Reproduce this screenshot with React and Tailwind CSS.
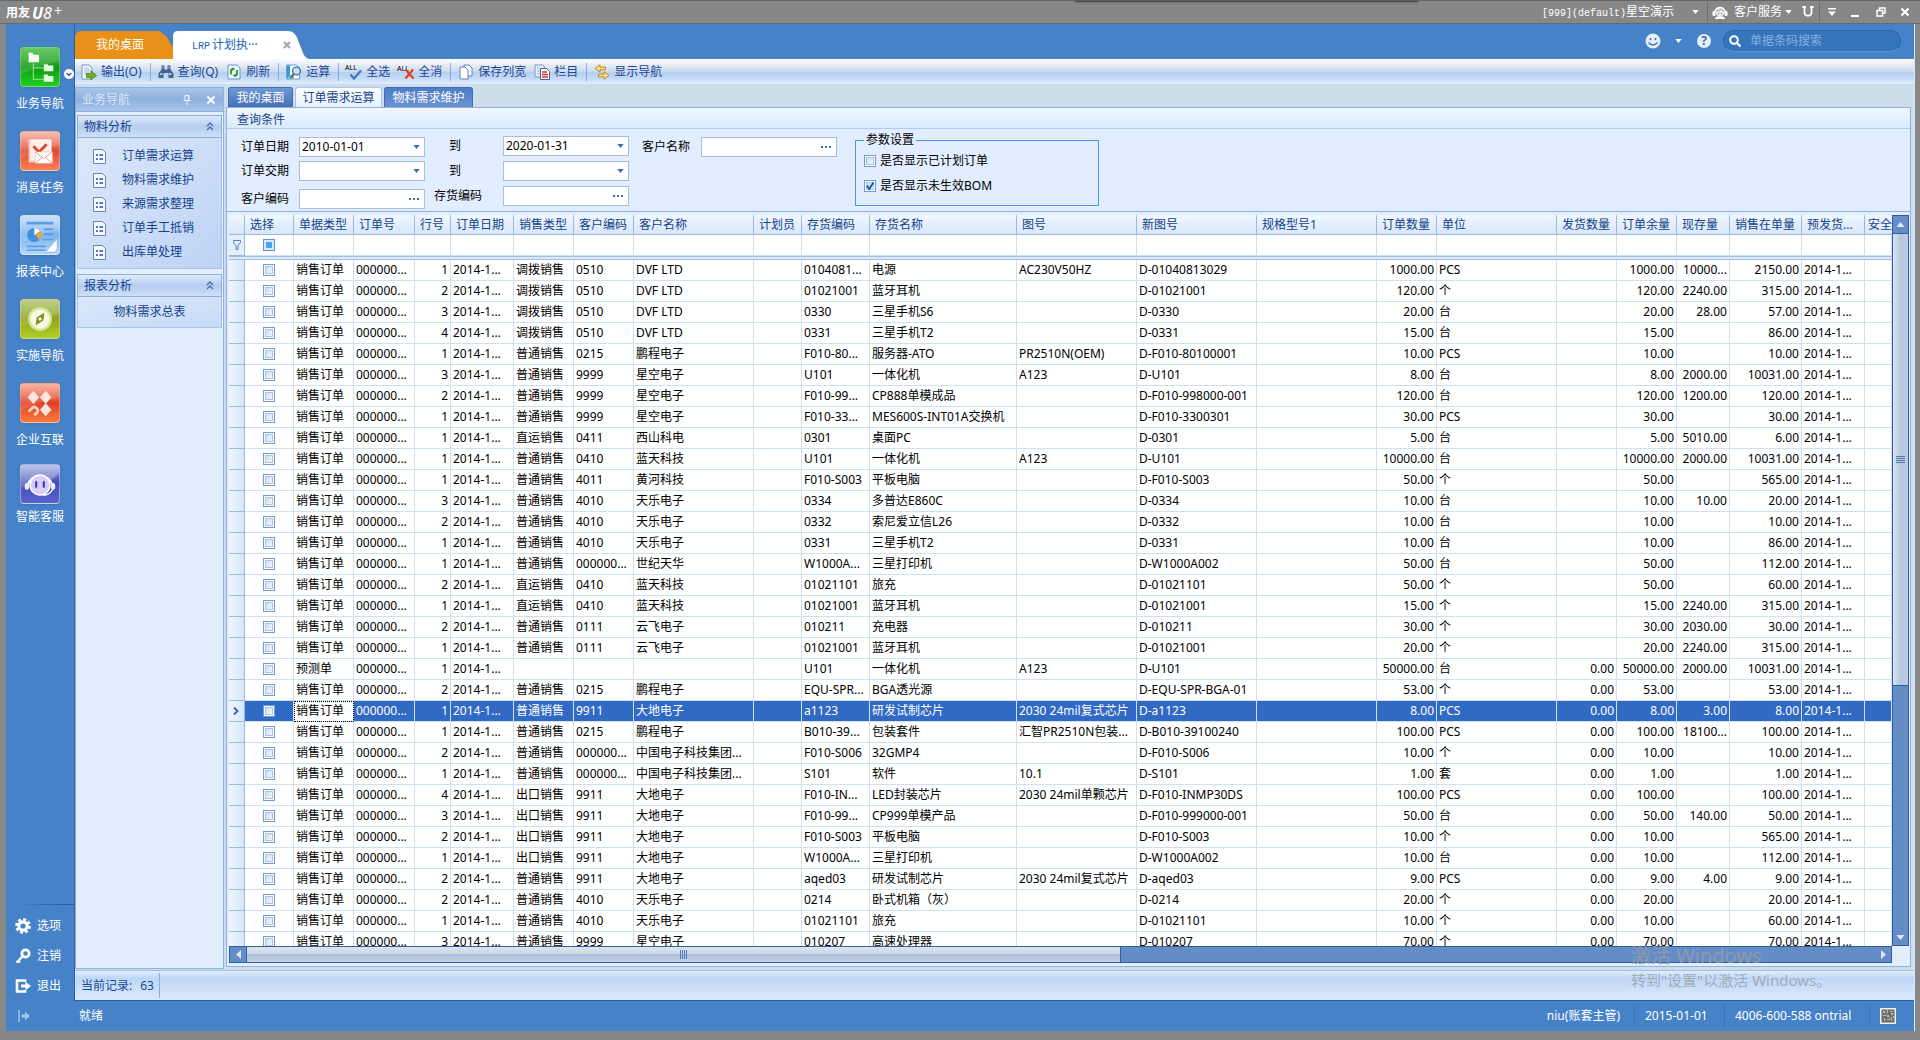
import React from "react";

const columns = [
  { label: "选择", w: "w-[49px]" },
  { label: "单据类型", w: "w-[60px]" },
  { label: "订单号", w: "w-[61px]" },
  { label: "行号", w: "w-[36px]", right: true },
  { label: "订单日期", w: "w-[63px]" },
  { label: "销售类型", w: "w-[60px]" },
  { label: "客户编码", w: "w-[60px]" },
  { label: "客户名称", w: "w-[120px]" },
  { label: "计划员", w: "w-[48px]" },
  { label: "存货编码", w: "w-[68px]" },
  { label: "存货名称", w: "w-[147px]" },
  { label: "图号", w: "w-[120px]" },
  { label: "新图号", w: "w-[120px]" },
  { label: "规格型号1", w: "w-[120px]" },
  { label: "订单数量", w: "w-[60px]", right: true },
  { label: "单位", w: "w-[120px]" },
  { label: "发货数量", w: "w-[60px]", right: true },
  { label: "订单余量", w: "w-[60px]", right: true },
  { label: "现存量", w: "w-[53px]", right: true },
  { label: "销售在单量", w: "w-[72px]", right: true },
  { label: "预发货...", w: "w-[63px]" },
  { label: "安全", w: "w-auto" },
];

const T = "调拨销售";
const P = "普通销售";
const Z = "直运销售";
const C = "出口销售";

// line, sales type, customer code, customer, item code, item name, drawing, new drawing, qty, unit, shipped, stock, on order
const records = [
  [1, T, "0510", "DVF LTD", "0104081...", "电源", "AC230V50HZ", "D-01040813029", "1000.00", "PCS", "", "10000...", "2150.00"],
  [2, T, "0510", "DVF LTD", "01021001", "蓝牙耳机", "", "D-01021001", "120.00", "个", "", "2240.00", "315.00"],
  [3, T, "0510", "DVF LTD", "0330", "三星手机S6", "", "D-0330", "20.00", "台", "", "28.00", "57.00"],
  [4, T, "0510", "DVF LTD", "0331", "三星手机T2", "", "D-0331", "15.00", "台", "", "", "86.00"],
  [1, P, "0215", "鹏程电子", "F010-80...", "服务器-ATO", "PR2510N(OEM)", "D-F010-80100001", "10.00", "PCS", "", "", "10.00"],
  [3, P, "9999", "星空电子", "U101", "一体化机", "A123", "D-U101", "8.00", "台", "", "2000.00", "10031.00"],
  [2, P, "9999", "星空电子", "F010-99...", "CP888单模成品", "", "D-F010-998000-001", "120.00", "台", "", "1200.00", "120.00"],
  [1, P, "9999", "星空电子", "F010-33...", "MES600S-INT01A交换机", "", "D-F010-3300301", "30.00", "PCS", "", "", "30.00"],
  [1, Z, "0411", "西山科电", "0301", "桌面PC", "", "D-0301", "5.00", "台", "", "5010.00", "6.00"],
  [1, P, "0410", "蓝天科技", "U101", "一体化机", "A123", "D-U101", "10000.00", "台", "", "2000.00", "10031.00"],
  [1, P, "4011", "黄河科技", "F010-S003", "平板电脑", "", "D-F010-S003", "50.00", "个", "", "", "565.00"],
  [3, P, "4010", "天乐电子", "0334", "多普达E860C", "", "D-0334", "10.00", "台", "", "10.00", "20.00"],
  [2, P, "4010", "天乐电子", "0332", "索尼爱立信L26", "", "D-0332", "10.00", "台", "", "", "10.00"],
  [1, P, "4010", "天乐电子", "0331", "三星手机T2", "", "D-0331", "10.00", "台", "", "", "86.00"],
  [1, P, "000000...", "世纪天华", "W1000A...", "三星打印机", "", "D-W1000A002", "50.00", "台", "", "", "112.00"],
  [2, Z, "0410", "蓝天科技", "01021101", "旅充", "", "D-01021101", "50.00", "个", "", "", "60.00"],
  [1, Z, "0410", "蓝天科技", "01021001", "蓝牙耳机", "", "D-01021001", "15.00", "个", "", "2240.00", "315.00"],
  [2, P, "0111", "云飞电子", "010211", "充电器", "", "D-010211", "30.00", "个", "", "2030.00", "30.00"],
  [1, P, "0111", "云飞电子", "01021001", "蓝牙耳机", "", "D-01021001", "20.00", "个", "", "2240.00", "315.00"],
  [1, "", "", "", "U101", "一体化机", "A123", "D-U101", "50000.00", "台", "0.00", "2000.00", "10031.00"],
  [2, P, "0215", "鹏程电子", "EQU-SPR...", "BGA透光源", "", "D-EQU-SPR-BGA-01", "53.00", "个", "0.00", "", "53.00"],
  [1, P, "9911", "大地电子", "a1123", "研发试制芯片", "2030 24mil复式芯片", "D-a1123", "8.00", "PCS", "0.00", "3.00", "8.00"],
  [1, P, "0215", "鹏程电子", "B010-39...", "包装套件", "汇智PR2510N包装...", "D-B010-39100240", "100.00", "PCS", "0.00", "18100...", "100.00"],
  [2, P, "000000...", "中国电子科技集团...", "F010-S006", "32GMP4", "", "D-F010-S006", "10.00", "个", "0.00", "", "10.00"],
  [1, P, "000000...", "中国电子科技集团...", "S101", "软件", "10.1", "D-S101", "1.00", "套", "0.00", "", "1.00"],
  [4, C, "9911", "大地电子", "F010-IN...", "LED封装芯片", "2030 24mil单颗芯片", "D-F010-INMP30DS", "100.00", "PCS", "0.00", "", "100.00"],
  [3, C, "9911", "大地电子", "F010-99...", "CP999单模产品", "", "D-F010-999000-001", "50.00", "台", "0.00", "140.00", "50.00"],
  [2, C, "9911", "大地电子", "F010-S003", "平板电脑", "", "D-F010-S003", "10.00", "个", "0.00", "", "565.00"],
  [1, C, "9911", "大地电子", "W1000A...", "三星打印机", "", "D-W1000A002", "10.00", "台", "0.00", "", "112.00"],
  [2, P, "9911", "大地电子", "aqed03", "研发试制芯片", "2030 24mil复式芯片", "D-aqed03", "9.00", "PCS", "0.00", "4.00", "9.00"],
  [2, P, "4010", "天乐电子", "0214", "卧式机箱（灰）", "", "D-0214", "20.00", "个", "0.00", "", "20.00"],
  [1, P, "4010", "天乐电子", "01021101", "旅充", "", "D-01021101", "10.00", "个", "0.00", "", "60.00"],
  [3, P, "9999", "星空电子", "010207", "高速处理器", "", "D-010207", "70.00", "个", "0.00", "", "70.00"],
];

const SELECTED = 21;
const FORECAST = 19;

function toCells(r, i) {
  return [
    i === FORECAST ? "预测单" : "销售订单", "000000...", r[0], "2014-1...", r[1], r[2], r[3], "",
    r[4], r[5], r[6], r[7], "", r[8], r[9], r[10], r[8], r[11], r[12], "2014-1...", "",
  ];
}

function Caret({ className = "" }) {
  return (
    <svg viewBox="0 0 8 5" className={`h-[4px] w-[7px] shrink-0 ${className}`} fill="currentColor" aria-hidden="true">
      <path d="M0 0h8L4 5z" />
    </svg>
  );
}

/* ---------- title bar ---------- */
function TitleBar() {
  return (
    <header className="relative flex h-6 shrink-0 items-center border-t border-b border-t-[#666] border-b-[#6a6a6a] bg-[#878787] pl-1.5 pr-1 text-white">
      <div className="absolute left-[56%] top-0 h-px w-[343px] bg-[#4d4d4d] shadow-[0_0_3px_#444]" />
      <h1 className="flex items-center gap-0.5 pt-0.5 text-xs font-bold leading-4 text-white">
        用友
        <span className="text-base font-bold italic leading-5 text-white">
          U<span className="font-normal">8</span>
        </span>
        <span className="self-start text-sm font-normal leading-4">+</span>
      </h1>
      <div className="ml-auto flex items-center">
        <button className="flex h-5 items-center gap-[18px] pr-2 text-xs">
          <span>
            <span className="font-['Liberation_Mono','Noto_Sans_CJK_SC',monospace] text-[10px]">[999](default)</span>星空演示
          </span>
          <Caret className="w-[6px]" />
        </button>
        <button className="flex h-5 items-center border-l border-[#6f6f6f] pl-1 pr-2.5 text-xs">
          <svg viewBox="0 0 16 14" className="mr-1.5 h-3.5 w-4" aria-hidden="true">
            <path d="M2 8a6 6.500 0 0 1 12 0l-1.500 0a4.500 4.500 0 0 0-9 0z" fill="#fff" />
            <circle cx="8" cy="7" r="4.500" fill="#e9e9e9" />
            <path d="M4 6c2 0 4-1 5-2 1 1 2 2 3.500 2" stroke="#999" fill="none" />
            <rect x="0.500" y="6" width="3" height="5" rx="1" fill="#fff" />
            <rect x="12.500" y="6" width="3" height="5" rx="1" fill="#fff" />
            <path d="M3 14c0-2 2-3 5-3s5 1 5 3z" fill="#fff" />
            <path d="M6 8.500h1M9 8.500h1" stroke="#777" />
          </svg>
          客户服务
          <Caret className="ml-[3px]" />
        </button>
        <button aria-label="UU" className="flex h-5 w-[18px] items-center border-r border-[#6f6f6f]">
          <svg viewBox="0 0 12 12" className="h-3 w-3" fill="none" stroke="#fff" strokeWidth="1.800" aria-hidden="true">
            <path d="M.5 1H4M8 1h3.500M2.500 1v5c0 5 7 5 7 0V1" />
          </svg>
        </button>
        <button aria-label="菜单" className="ml-2 flex h-4 w-4 items-center">
          <svg viewBox="0 0 8 8" className="h-2 w-2" fill="#fff" aria-hidden="true"><path d="M0 0h8v1.500H0zM0 3.500h8L4 8z" /></svg>
        </button>
        <button aria-label="最小化" className="ml-1.5 flex h-4 w-[20px] items-center">
          <svg viewBox="0 0 10 10" className="h-2.5 w-2.5" fill="#fff" aria-hidden="true"><path d="M1 8h8v2H1z" /></svg>
        </button>
        <button aria-label="还原" className="ml-1.5 flex h-4 w-[18px] items-center">
          <svg viewBox="0 0 10 10" className="h-2.5 w-2.5" fill="none" stroke="#fff" strokeWidth="1.500" aria-hidden="true"><path d="M3.500 3V1h5.500v5H7M1 3.500h5.500v5.500H1z" /></svg>
        </button>
        <button aria-label="关闭" className="ml-1.5 flex h-4 w-4 items-center">
          <svg viewBox="0 0 10 10" className="h-2.5 w-2.5" stroke="#fff" strokeWidth="2.200" aria-hidden="true"><path d="M1.500 1.500l7 7M8.500 1.500l-7 7" /></svg>
        </button>
      </div>
    </header>
  );
}

/* ---------- left side bar ---------- */
function TreeIcon() {
  return (
    <g>
      <path d="M13 16v17h11M13 21h11" stroke="#7fe07a" strokeWidth="1.300" fill="none" />
      <path d="M8 5h4l1 2h6v8H8z" fill="#f2fff0" />
      <path d="M24 17h4l1 1.500h5v6H24zM24 28h4l1 1.500h5v6H24z" fill="#e2ffe0" />
    </g>
  );
}
function MailIcon() {
  return (
    <g>
      <path d="M8 8h24v24H8z" fill="#fbe2dd" opacity=".8" />
      <path d="M10 8h22v22H10z" fill="#fdf1ee" />
      <path d="M13 15l6 6 8-8" stroke="#e2452f" strokeWidth="3" fill="none" />
      <path d="M15 21h18v12H15z" fill="#fff" stroke="#f0b7a8" strokeWidth=".7" />
      <path d="M15 21l9 7 9-7M15 33l7-6M33 33l-7-6" stroke="#dc9a8c" fill="none" />
    </g>
  );
}
function ReportIcon() {
  return (
    <g>
      <path d="M6 6h28v3H6zM24 13h10v2H24zM24 18h10v2H24zM6 31h20v2H6zM6 35h20v1.500H6zM22 24h12v1.500H22z" fill="#5b9fe4" />
      <circle cx="14" cy="20" r="7.500" fill="#3f91e0" />
      <path d="M14 20V12.500A7.500 7.500 0 0 1 21 18z" fill="#fff" />
      <path d="M15 19l5.500-3.500A7.500 7.500 0 0 1 19 25.500z" fill="#e6a43a" />
      <path d="M26 38l12-14v10q0 4-4 4z" fill="#fff" stroke="#7fb2ea" strokeWidth=".6" />
    </g>
  );
}
function CompassIcon() {
  return (
    <g>
      <circle cx="20" cy="20" r="12.500" fill="#d7e89e" />
      <circle cx="20" cy="20" r="10" fill="#f6fbe2" />
      <path d="M24.500 13.500l-1 8-8 5 1-8z" fill="#7b8f1b" />
      <circle cx="20" cy="20" r="1.800" fill="#f6fbe2" />
    </g>
  );
}
function LinkIcon() {
  return (
    <g fill="#fbe6de">
      <path d="M13 7l6 7-6 7-6-7zM26 7l6 7-6 7-6-7zM26 20l6 7-6 7-6-7z" />
      <path d="M8 29l4-4a3.600 3.600 0 0 1 5 5l-3 3" stroke="#f9cfc0" strokeWidth="3" fill="none" />
    </g>
  );
}
function RobotIcon() {
  return (
    <g>
      <path d="M0 23Q26 23 40 9v31H0z" fill="#2b32b0" opacity=".45" />
      <path d="M7 21a13.500 13.500 0 0 1 26 0" fill="none" stroke="#fff" strokeWidth="2" />
      <circle cx="20" cy="21" r="10.500" fill="#d9cdf8" stroke="#fff" strokeWidth="1.500" />
      <rect x="4" y="19" width="4.500" height="7" rx="2" fill="#eee" />
      <rect x="31.500" y="19" width="4.500" height="7" rx="2" fill="#eee" />
      <path d="M16 18v5M24 18v5" stroke="#2c3bd0" strokeWidth="2.200" strokeLinecap="round" />
      <path d="M33 26q-2 5-10 6" stroke="#fff" strokeWidth="1.500" fill="none" />
    </g>
  );
}

const apps = [
  { label: "业务导航", icon: TreeIcon, bg: "from-[#4fc04a] via-[#0b9b12] to-[#22cf21]" },
  { label: "消息任务", icon: MailIcon, bg: "from-[#f6b3a6] via-[#e2492f] to-[#fb8157]" },
  { label: "报表中心", icon: ReportIcon, bg: "from-[#c5def8] via-[#7db4ee] to-[#b3d6fb]" },
  { label: "实施导航", icon: CompassIcon, bg: "from-[#b4c572] via-[#8fa81c] to-[#b2cf24]" },
  { label: "企业互联", icon: LinkIcon, bg: "from-[#f6a893] via-[#e03c22] to-[#fa7a3e]" },
  { label: "智能客服", icon: RobotIcon, bg: "from-[#b6bbe6] via-[#5a60c0] to-[#7f8de6]" },
];

function GearIcon() {
  return (
    <svg viewBox="0 0 16 16" className="h-4 w-4" aria-hidden="true">
      <circle cx="8" cy="8" r="4.200" fill="none" stroke="#fff" strokeWidth="3.200" />
      <circle cx="8" cy="8" r="6.600" fill="none" stroke="#fff" strokeWidth="2.600" strokeDasharray="2.900 2.280" />
    </svg>
  );
}
function KeyIcon() {
  return (
    <svg viewBox="0 0 16 16" className="h-4 w-4" fill="none" stroke="#fff" aria-hidden="true">
      <circle cx="10.500" cy="5.500" r="3.700" strokeWidth="2.800" />
      <path d="M7.500 8.500L1.500 14.500M3 12.500l2 2" strokeWidth="2.400" />
    </svg>
  );
}
function ExitIcon() {
  return (
    <svg viewBox="0 0 16 16" className="h-4 w-4" aria-hidden="true">
      <path d="M10 4V2.500H2v11h8V12" fill="none" stroke="#fff" strokeWidth="2.600" />
      <path d="M6 6.500h4.500V3.800L16 8l-5.500 4.200V9.500H6z" fill="#fff" />
    </svg>
  );
}

function SideBar() {
  return (
    <nav className="flex w-[69px] shrink-0 flex-col border-r border-[#2c5fa3]">
      <ul className="flex flex-col pt-[23px]">
        {apps.map(({ label, icon: Icon, bg }, i) => (
          <li key={label} className={i < 4 ? "pb-[19px]" : "pb-4"}>
            <button className={`relative flex w-full flex-col items-center text-xs leading-4 text-white ${i < 5 ? "gap-[9px]" : "gap-[5px]"}`}>
              <svg viewBox="0 0 40 40" className={`h-10 w-10 rounded-[4px] border border-white/30 bg-gradient-to-b shadow-sm ${bg}`} aria-hidden="true">
                <path d="M0 0h40v14Q22 18 0 28z" fill="#fff" opacity=".14" />
                <Icon />
              </svg>
              <span>{label}</span>
              {i === 0 && (
                <svg viewBox="0 0 10 10" className="absolute right-0 top-[22px] h-[10px] w-[10px]" aria-hidden="true">
                  <circle cx="5" cy="5" r="5" fill="#fff" />
                  <path d="M2.700 4L5 6.400 7.300 4" fill="none" stroke="#3a5f94" strokeWidth="1.500" />
                </svg>
              )}
            </button>
          </li>
        ))}
      </ul>
      <div className="mt-auto flex flex-col">
        <div className="ml-2 h-px bg-gradient-to-r from-transparent to-[#25589c]" />
        {[["选项", GearIcon], ["注销", KeyIcon], ["退出", ExitIcon]].map(([label, Icon]) => (
          <button key={label} className="flex h-[30px] items-center gap-1.5 pl-[9px] text-xs text-white first-of-type:mt-1.5">
            <Icon />
            {label}
          </button>
        ))}
      </div>
    </nav>
  );
}

/* ---------- tab band ---------- */
function TabBand() {
  return (
    <div className="flex h-[35px] items-end pr-[13px]">
      <div className="flex" role="tablist">
        <button role="tab" className="h-7 w-[98px] rounded-tl-[6px] bg-[#e89018] pr-2 text-xs text-white [clip-path:polygon(0_0,86%_0,93%_18%,100%_60%,100%_100%,0_100%)]">
          我的桌面
        </button>
        <div className="relative flex h-7 w-[136px] items-center">
          <svg viewBox="0 0 136 28" className="absolute inset-0 h-7 w-[136px]" aria-hidden="true">
            <path d="M0 28V5Q0 0 5 0h110q7 0 10 9l5 13q2 5 6 6z" fill="#fff" />
          </svg>
          <button role="tab" aria-selected="true" className="relative pl-[19px] text-xs text-[#1a64b4]">
            <span className="font-['Liberation_Mono','Noto_Sans_CJK_SC',monospace] text-[10px]">LRP</span>
            <span className="pl-0.5">计划执···</span>
          </button>
          <button aria-label="关闭标签" className="absolute left-[110px] top-[10px]">
            <svg viewBox="0 0 8 8" className="h-2 w-2" stroke="#a8a8a8" strokeWidth="2.200" aria-hidden="true"><path d="M1 1l6 6M7 1l-6 6" /></svg>
          </button>
        </div>
      </div>
      <div className="mb-[7px] ml-auto flex h-[22px] items-center">
        <button aria-label="表情" className="flex items-center gap-[14px]">
          <svg viewBox="0 0 16 16" className="h-4 w-4" aria-hidden="true">
            <circle cx="8" cy="8" r="7.500" fill="#e6eefa" />
            <path d="M5.500 5v2.200M10.500 5v2.200" stroke="#3a6fb5" strokeWidth="1.600" />
            <path d="M3.500 9.500q4.500 5 9 0" fill="none" stroke="#3a6fb5" strokeWidth="1.300" />
          </svg>
          <Caret className="text-white" />
        </button>
        <button aria-label="帮助" className="ml-[15px] flex h-[14px] w-[14px] items-center justify-center rounded-full bg-[#e6eefa] text-xs font-bold leading-3 text-[#3a6fb5]">
          ?
        </button>
        <label className="ml-3 flex h-[22px] w-[178px] items-center gap-[9px] rounded-full border border-[#2d65a8] border-b-[#5b93d3] bg-[#3474bb] pl-[5px]">
          <svg viewBox="0 0 12 12" className="h-3 w-3 shrink-0" fill="none" stroke="#fff" aria-hidden="true">
            <circle cx="5" cy="5" r="3.800" strokeWidth="2" />
            <path d="M8 8l3.500 3.500" strokeWidth="2.200" />
          </svg>
          <input aria-label="单据条码搜索" placeholder="单据条码搜索" className="w-full min-w-0 bg-transparent text-xs text-white outline-none placeholder:text-[#86b0e2]" />
        </label>
      </div>
    </div>
  );
}

/* ---------- tool bar ---------- */
const icons = {
  export: (
    <>
      <path d="M1 1h7l3 3v11H1z" fill="#f6faff" stroke="#6f93c6" />
      <path d="M3 4h5M3 6h7M3 8h6M3 10h4" stroke="#9db8dd" />
      <path d="M5.500 9.500H10V7l5.500 4.500L10 16v-2.500H5.500z" fill="#6fae1d" stroke="#44780c" strokeWidth=".7" />
    </>
  ),
  find: (
    <>
      <path d="M3.500 1.500h3v4h3v-4h3v4l3 4v4.500h-5V9h-5v5h-5V9.500l3-4z" fill="#46628f" />
      <path d="M2 10h2.500M11 10h2.500M4.500 3.500h1M10.500 3.500h1" stroke="#d5e2f5" strokeWidth="1.400" />
    </>
  ),
  refresh: (
    <>
      <path d="M2 1h9l3 3v11H2z" fill="#eef5ff" stroke="#6f93c6" />
      <path d="M5 10.500V6.500q0-1.500 2-1.500M11 6v4q0 1.500-2 1.500" fill="none" stroke="#1d9a24" strokeWidth="1.800" />
      <path d="M6.500 3v4L9 5zM9.500 13.500v-4L7 11.500z" fill="#1d9a24" />
    </>
  ),
  calc: (
    <>
      <path d="M.5 1h10l3 3v11H.5z" fill="#fff" stroke="#6aa3d8" />
      <path d="M1 1.500h3V11l-3 4z" fill="#2f9bd6" />
      <path d="M1 15l3-4h4v4z" fill="#69bde8" />
      <circle cx="10.500" cy="7" r="3.900" fill="#bfe3fa" stroke="#4b6f9e" strokeWidth="1.400" />
      <path d="M7.700 9.800L4.500 14" stroke="#7a6247" strokeWidth="2" />
    </>
  ),
  all: (
    <>
      <text x="-1" y="6" fontSize="7" fill="#000" fontFamily="Noto Sans">ALL</text>
      <path d="M4.500 10.500l3.500 4 7-8" fill="none" stroke="#4a72c4" strokeWidth="2.200" />
    </>
  ),
  none: (
    <>
      <text x="-1" y="7" fontSize="7" fill="#000" fontFamily="Noto Sans">ALL</text>
      <path d="M7.500 5.500l8 9M15 5.500l-7.500 9" stroke="#e63c1c" strokeWidth="2.200" />
    </>
  ),
  save: (
    <>
      <path d="M6 1h5l3 3v8H6z" fill="#fff" stroke="#5f84bb" />
      <path d="M2 3h5l3 3v9H2z" fill="#fff" stroke="#5f84bb" />
    </>
  ),
  cols: (
    <>
      <path d="M1 1h8l2 3v9H1z" fill="#e9f1fd" stroke="#7b98c8" />
      <path d="M3 4h3M3 7h3M3 10h3" stroke="#9db3d6" />
      <path d="M6.500 4.500h6l3 3v8h-9z" fill="#fff" stroke="#4a5f9c" />
      <path d="M8 8h5M8 10.500h6M8 13h6" stroke="#e03020" strokeWidth="1.400" />
    </>
  ),
  nav: (
    <path d="M1 4.500L6 .8v2.400h5.500v2.600H6v2.400zM15 11.500l-5 3.700v-2.400H4.500v-2.600H10V7.800z" fill="#fbe08a" stroke="#b88312" strokeWidth=".9" />
  ),
};

const tools = [
  ["export", "输出(O)", true], ["find", "查询(Q)"], ["refresh", "刷新", true], ["calc", "运算", true],
  ["all", "全选"], ["none", "全消", true], ["save", "保存列宽"], ["cols", "栏目", true], ["nav", "显示导航"],
];

function ToolBar() {
  return (
    <div role="toolbar" className="flex h-[25px] items-center bg-[linear-gradient(#fdfdfd,#ccdaed_50%,#b4cff2_52%,#c6dcf7_80%,#e4effc)] pl-1.5">
      {tools.map(([icon, label, sep]) => (
        <React.Fragment key={label}>
          <button className="mr-2 flex items-center gap-1 text-xs text-[#1f4694]">
            <svg viewBox="0 0 16 16" className="h-4 w-4 overflow-visible" fill="none" aria-hidden="true">{icons[icon]}</svg>
            {label}
          </button>
          {sep && <span className="mr-[7px] h-[18px] w-px bg-[#8cabd6]" />}
        </React.Fragment>
      ))}
    </div>
  );
}

/* ---------- navigation panel ---------- */
function GroupHeader({ title }) {
  return (
    <button className="flex h-[23px] w-full items-center justify-between border border-[#8db1df] bg-gradient-to-b from-[#dfebfa] via-[#b5cdf0] to-[#cfe0f7] pl-1.5 pr-[7px] text-xs text-[#15428b]">
      {title}
      <svg viewBox="0 0 8 9" className="h-[9px] w-2" fill="none" stroke="#3f6bb8" strokeWidth="1.300" aria-hidden="true">
        <path d="M1 4l3-3 3 3M1 8l3-3 3 3" />
      </svg>
    </button>
  );
}

function NavPanel() {
  return (
    <aside className="flex w-[149px] shrink-0 flex-col border border-[#8fb2e2] bg-[#e2eeff]">
      <div className="mb-[3px] flex h-6 items-center border-b border-[#8fb0dc] bg-gradient-to-b from-[#a9c5ea] via-[#8db0dc] to-[#a9c6eb] pl-1.5 pr-2 text-xs text-[#dbe8fa]">
        <h2>业务导航</h2>
        <button aria-label="固定" className="ml-auto mr-4">
          <svg viewBox="0 0 8 10" className="h-2.5 w-2" fill="none" stroke="#eef4fd" aria-hidden="true"><path d="M2 .5h4v5H2zM.5 5.500h7M4 5.500V10M5.500.5v5" /></svg>
        </button>
        <button aria-label="关闭">
          <svg viewBox="0 0 8 8" className="h-2 w-2" stroke="#fff" strokeWidth="2" aria-hidden="true"><path d="M.5.5l7 7M7.500.5l-7 7" /></svg>
        </button>
      </div>
      <div className="flex flex-col gap-[5px] px-px">
        <section>
          <GroupHeader title="物料分析" />
          <ul className="flex flex-col border border-t-0 border-[#a9c4ea] bg-gradient-to-br from-[#dce8fa] to-[#bdd3f4] pb-1 pt-1.5">
            {["订单需求运算", "物料需求维护", "来源需求整理", "订单手工抵销", "出库单处理"].map((t) => (
              <li key={t}>
                <a href="#" className="flex h-6 items-center gap-4 pl-[15px] text-xs text-[#15428b]">
                  <svg viewBox="0 0 13 15" className="h-[15px] w-[13px]" aria-hidden="true">
                    <path d="M.5.5h9l3 3v11H.5z" fill="#f3f8ff" stroke="#6684b5" />
                    <path d="M3 6h2M3 10h2M6.500 6H10M6.500 10H10" stroke="#2a4a88" strokeWidth="1.300" />
                  </svg>
                  {t}
                </a>
              </li>
            ))}
          </ul>
        </section>
        <section>
          <GroupHeader title="报表分析" />
          <div className="border border-t-0 border-[#a9c4ea] bg-gradient-to-br from-[#dce8fa] to-[#c6daf6] py-1">
            <a href="#" className="flex h-[22px] items-center justify-center text-xs text-[#15428b]">物料需求总表</a>
          </div>
        </section>
      </div>
    </aside>
  );
}

/* ---------- query form ---------- */
function Field({ label, value = "", kind = "date", labelClass = "w-[58px]", boxClass = "w-[126px]", id }) {
  return (
    <div className="flex h-5 items-center text-xs text-black">
      <label htmlFor={id} className={`shrink-0 ${labelClass}`}>{label}</label>
      <div className={`flex h-5 items-center border border-[#a5bfe0] bg-white pl-0.5 pr-1 ${boxClass}`}>
        <input id={id} defaultValue={value} className="w-full min-w-0 flex-1 text-xs outline-none" />
        <button type="button" aria-label={`选择${label}`} className="text-[#3a6fb5]">
          {kind === "date" ? (
            <Caret className="w-[6px]" />
          ) : (
            <svg viewBox="0 0 11 2" className="h-0.5 w-[11px]" fill="currentColor" aria-hidden="true"><path d="M0 0h2v2H0zM4 0h2v2H4zM8 0h2v2H8z" /></svg>
          )}
        </button>
      </div>
    </div>
  );
}

const gridBox =
  "block h-3 w-3 appearance-none border border-[#6f9bd6] bg-[linear-gradient(135deg,#c3d6ef,#fff)] bg-clip-border shadow-[inset_0_0_0_1px_#fff,inset_0_0_0_2px_#a9c3e6]";

function Option({ label, checked }) {
  return (
    <label className="flex h-[25px] items-center gap-1 text-xs text-black">
      <span className="relative">
        <input type="checkbox" defaultChecked={checked} className={gridBox} />
        {checked && (
          <svg viewBox="0 0 12 12" className="pointer-events-none absolute inset-0 h-3 w-3" fill="none" stroke="#1d5cab" strokeWidth="2" aria-hidden="true">
            <path d="M3 5.500L5.200 9 9.500 2.500" />
          </svg>
        )}
      </span>
      {label}
    </label>
  );
}

function QueryForm() {
  return (
    <form className="flex h-[82px] items-start pl-[14px]">
      <div className="flex flex-col pt-2">
        <Field id="d1" label="订单日期" value="2010-01-01" />
        <div className="mt-1"><Field id="d2" label="订单交期" /></div>
        <div className="mt-2"><Field id="d3" label="客户编码" kind="more" /></div>
      </div>
      <div className="ml-2 flex flex-col gap-[5px] pt-[7px]">
        <Field id="e1" label="到" value="2020-01-31" labelClass="w-[70px] pl-4" />
        <Field id="e2" label="到" labelClass="w-[70px] pl-4" />
        <Field id="e3" label="存货编码" kind="more" labelClass="w-[70px] pl-px" />
      </div>
      <div className="ml-[13px] pt-2">
        <Field id="f1" label="客户名称" kind="more" labelClass="w-[59px]" boxClass="w-[136px]" />
      </div>
      <fieldset className="ml-[18px] mt-[3px] h-[74px] w-[244px] border border-[#4d94ee] pl-2">
        <legend className="px-0.5 text-xs leading-4 text-black">参数设置</legend>
        <Option label="是否显示已计划订单" />
        <Option label="是否显示未生效BOM" checked />
      </fieldset>
    </form>
  );
}

/* ---------- grid ---------- */
function Grid() {
  return (
    <div className="flex min-h-0 flex-1 flex-col border-t border-[#8fb2dc] bg-[#e2eeff] pb-px pl-0.5 pt-[3px]">
      <div className="flex min-h-0 flex-1">
        <div className="min-w-0 flex-1 overflow-hidden bg-white">
          <table className="w-full table-fixed border-separate border-spacing-0 text-xs leading-4 text-black">
            <colgroup>
              <col className="w-4" />
              {columns.map((c) => <col key={c.label} className={c.w} />)}
            </colgroup>
            <thead>
              <tr className="h-5 bg-gradient-to-b from-[#f1f7ff] to-[#d6e6fa]">
                <th className="border-b border-r border-[#9db9de] p-0" />
                {columns.map((c) => (
                  <th key={c.label} scope="col" className="overflow-hidden whitespace-nowrap border-b border-r border-[#9db9de] py-0 pl-[5px] pr-0 text-left font-normal text-[#15428b] last:border-r-0 last:pl-[3px]">
                    {c.label}
                  </th>
                ))}
              </tr>
              <tr className="h-[21px]">
                <td className="border-b border-r border-[#9db9de] bg-[#e4effc] p-0">
                  <svg viewBox="0 0 8 10" className="mx-auto h-2.5 w-2" fill="none" stroke="#5b7fb8" aria-hidden="true"><path d="M.5.5h7v2L5 5.500v4H3v-4L.5 2.500z" /></svg>
                </td>
                <td className="border-b border-r border-[#cfe0f2] p-0">
                  <input type="checkbox" aria-label="筛选选择" className="mx-auto block h-3 w-3 appearance-none border border-[#5f92d6] bg-[#49a5e8] shadow-[inset_0_0_0_2px_#d4ebfd]" />
                </td>
                {columns.slice(1).map((c) => <td key={c.label} className="border-b border-r border-[#cfe0f2] p-0" />)}
              </tr>
              <tr className="h-1">
                <td colSpan={23} className="h-1 border-b border-t border-[#a3bede] bg-[#dbe8fa] p-0" />
              </tr>
            </thead>
            <tbody>
              {records.map((r, i) => {
                const on = i === SELECTED;
                return (
                  <tr key={i} className={on ? "h-[21px] bg-[#316ac5] text-white" : "h-[21px]"}>
                    <th scope="row" className="border-b border-r border-[#9db9de] bg-gradient-to-r from-[#eff6ff] to-[#d6e6fa] p-0">
                      {on && (
                        <svg viewBox="0 0 7 8" className="mx-auto h-2 w-[7px]" fill="none" stroke="#33609f" strokeWidth="1.800" aria-hidden="true"><path d="M1 .5L4.500 4 1 7.500" /></svg>
                      )}
                    </th>
                    <td className="border-b border-r border-[#cfe0f2] p-0">
                      <input type="checkbox" aria-label={`选择第${i + 1}行`} className={`mx-auto ${gridBox}`} />
                    </td>
                    {toCells(r, i).map((v, j) => (
                      <td
                        key={j}
                        className={`overflow-hidden whitespace-nowrap border-b border-r border-[#cfe0f2] px-0.5 py-0 ${columns[j + 1].right ? "text-right" : ""} ${on && j === 0 ? "bg-white text-black outline-1 -outline-offset-1 outline-dotted outline-black" : ""}`}
                      >
                        {v}
                      </td>
                    ))}
                  </tr>
                );
              })}
            </tbody>
          </table>
        </div>
        <div className="mr-px flex w-[17px] flex-col border border-[#2f5d9e] bg-[#648dc8]">
          <button aria-label="向上滚动" className="flex h-[17px] items-center justify-center text-white/80">
            <Caret className="h-[5px] w-[9px] rotate-180" />
          </button>
          <div className="flex h-[453px] items-center justify-center border-y border-[#2f5d9e] bg-gradient-to-r from-[#dde6f1] via-[#b4c6df] to-[#bccde3]">
            <svg viewBox="0 0 9 8" className="h-2 w-[9px]" stroke="#5578ab" aria-hidden="true"><path d="M0 .5h9M0 2.500h9M0 4.500h9M0 6.500h9" /></svg>
          </div>
          <button aria-label="向下滚动" className="mt-auto flex h-[15px] items-center justify-center text-white/80">
            <Caret className="h-[5px] w-[9px]" />
          </button>
        </div>
      </div>
      <div className="mb-0.5 mr-[18px] flex h-[17px] shrink-0 border border-[#2f5d9e] bg-[#648dc8]">
        <button aria-label="向左滚动" className="flex w-4 items-center justify-center">
          <svg viewBox="0 0 5 9" className="h-[9px] w-[5px]" fill="#d9e5f5" aria-hidden="true"><path d="M5 0v9L0 4.500z" /></svg>
        </button>
        <div className="flex w-[52.7%] items-center justify-center border-x border-[#2f5d9e] bg-[linear-gradient(#dde5ee,#cbd7e5_45%,#aec1da_50%,#c3d2e3)]">
          <svg viewBox="0 0 8 9" className="h-[9px] w-2" stroke="#5578ab" aria-hidden="true"><path d="M.5 0v9M2.500 0v9M4.500 0v9M6.500 0v9" /></svg>
        </div>
        <button aria-label="向右滚动" className="ml-auto flex w-4 items-center justify-center">
          <svg viewBox="0 0 5 9" className="h-[9px] w-[5px]" fill="#d9e5f5" aria-hidden="true"><path d="M0 0v9l5-4.500z" /></svg>
        </button>
      </div>
    </div>
  );
}

/* ---------- work area ---------- */
function WorkArea() {
  return (
    <section className="ml-0.5 mr-[3px] flex min-w-0 flex-1 flex-col pb-0.5">
      <div role="tablist" className="flex h-5 items-end gap-0.5 pl-0.5 text-xs">
        <button role="tab" className="h-5 w-[65px] rounded-t-[3px] border border-b-0 border-[#3f6cb5] bg-gradient-to-b from-[#7098d5] to-[#4670b6] text-white">我的桌面</button>
        <button role="tab" aria-selected="true" className="h-5 w-[87px] rounded-t-[3px] border border-b-0 border-[#a9c6ee] bg-gradient-to-b from-white to-[#e6f1ff] text-[#15428b]">订单需求运算</button>
        <button role="tab" className="h-5 w-[89px] rounded-t-[3px] border border-b-0 border-[#3f6cb5] bg-gradient-to-b from-[#4f7dc6] to-[#6b93d2] text-white">物料需求维护</button>
      </div>
      <div className="flex min-h-0 flex-1 flex-col border border-[#8fb2e2] bg-[#e2eeff]">
        <h2 className="h-[21px] shrink-0 border-b border-[#a9cbf5] bg-gradient-to-b from-[#f0f7ff] to-[#d9eafd] pl-2.5 text-xs leading-6 text-[#15428b]">查询条件</h2>
        <QueryForm />
        <Grid />
      </div>
    </section>
  );
}

/* ---------- status bar ---------- */
function StatusBar() {
  return (
    <footer className="flex h-[30px] shrink-0 items-center text-xs text-white">
      <button aria-label="收起" className="w-[73px] pl-3">
        <svg viewBox="0 0 12 12" className="h-3 w-3" aria-hidden="true">
          <path d="M1 0v12" stroke="#9fc3ee" strokeWidth="1.600" />
          <path d="M3.500 4.500H7V1.500L12 6l-5 4.500v-3H3.500z" fill="#9fc3ee" />
        </svg>
      </button>
      <span>就绪</span>
      <div className="ml-auto mr-[18px] flex h-[22px] items-center">
        <span className="flex h-full items-center border-r border-[#3a70b5] pr-3.5">niu(账套主管)</span>
        <span className="flex h-full w-[90px] items-center border-r border-[#3a70b5] pl-2.5">2015-01-01</span>
        <span className="flex h-full w-[145px] items-center border-r border-[#3a70b5] pl-2.5">4006-600-588 ontrial</span>
        <svg viewBox="0 0 16 16" className="ml-2.5 h-4 w-4" aria-hidden="true">
          <path d="M0 0h16v16H0z" fill="#f2f2f2" />
          <path d="M1.500 1.500h13v13h-13z" fill="#6b6b6b" />
          <path d="M3 3h2v2H3zM7 2h1v3H7zM10 3h3v1h-3zM11 5h2v2h-2zM3 7h3v1H3zM7 7h2v2H7zM4 10h1v3H4zM7 11h3v1H7zM11 9h1v4h-1zM13 8h1v2h-1zM6 5h1v1H6zM9 9h1v1H9z" fill="#bdbdbd" />
        </svg>
      </div>
    </footer>
  );
}

export default function App() {
  return (
    <div className="relative flex h-screen flex-col overflow-hidden bg-[#878787] font-['Noto_Sans','Noto_Sans_CJK_SC',sans-serif] text-xs">
      <TitleBar />
      <div className="mb-[9px] ml-[6px] mr-[5px] flex min-h-0 flex-1 flex-col border-r border-[#dfe8f3] bg-[#4682c8]">
        <div className="flex min-h-0 flex-1">
          <SideBar />
          <main className="flex min-w-0 flex-1 flex-col">
            <TabBand />
            <ToolBar />
            <div className="flex min-h-0 flex-1 bg-[#cdddec] pb-px pt-[3px]">
              <NavPanel />
              <WorkArea />
            </div>
            <div className="flex h-[31px] shrink-0 border-b border-t border-b-[#2c5fa3] border-t-[#9dc0ee] bg-[linear-gradient(#e2eefc,#bdd7f7_25%,#dce9fb)] text-xs text-[#1f4694]">
              <span className="my-0.5 flex items-center gap-2 border-r border-[#8cabd6] pl-1.5 pr-[5px]">
                <span>当前记录:</span>
                <span>63</span>
              </span>
            </div>
          </main>
        </div>
        <StatusBar />
      </div>
      <div className="pointer-events-none absolute bottom-12 right-[92px] w-[197px] whitespace-nowrap text-[#999da3]/80">
        <p className="text-xl leading-6">激活 Windows</p>
        <p className="text-[15px] leading-6">转到"设置"以激活 Windows。</p>
      </div>
    </div>
  );
}
